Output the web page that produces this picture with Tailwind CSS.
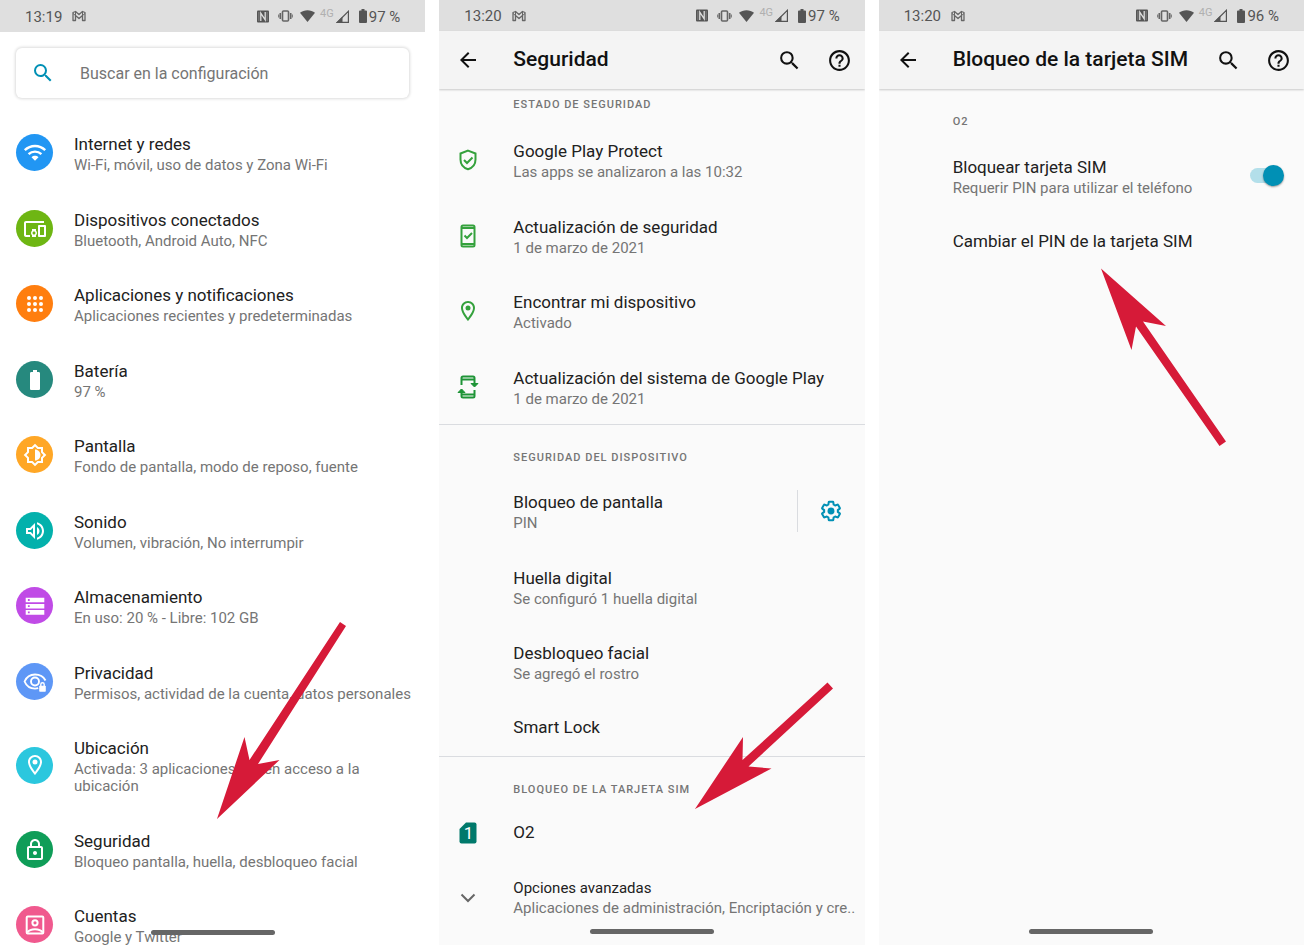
<!DOCTYPE html>
<html lang="es">
<head>
  <meta charset="UTF-8">
  <meta name="viewport" content="width=device-width, initial-scale=1.0">
  <title>Ajustes - Bloqueo de la tarjeta SIM</title>
  <script src="https://cdn.jsdelivr.net/npm/@tailwindcss/browser@4"></script>
</head>
<body class="bg-white font-[Roboto,sans-serif] text-[#212121]">

  <!-- Shared icons -->
  <svg class="hidden">
    <symbol id="gmail" viewBox="0 0 14 12">
      <path d="M1 10.500V2.500L3.500 1.500L7 4.500L10.500 1.500L13 2.500V10.500H10.500V5.500L7 8.500L3.500 5.500V10.500Z" fill="none" stroke="#666" stroke-width="1.300" stroke-linejoin="round" />
      <path d="M3.500 1.500V5.500M10.500 1.500V5.500M1 3.500L3.500 5.500M13 3.500L10.500 5.500" fill="none" stroke="#666" />
    </symbol>
    <symbol id="nfc" viewBox="0 0 12 13">
      <path d="M1 .5H11Q12 .5 12 1.500V11.500Q12 12.500 11 12.500H1Q0 12.500 0 11.500V1.500Q0 .5 1 .5Z" fill="#555" />
      <path d="M3.800 11V3.200L8.200 9.800V2" fill="none" stroke="#dfdfdf" stroke-width="1.300" />
      <path d="M1.900 2V11M10.100 2V11" stroke="#999" stroke-width=".7" />
    </symbol>
    <symbol id="vibration" viewBox="0 0 15 12">
      <rect x="4.500" y="1" width="6" height="10" rx="1" fill="none" stroke="#666" stroke-width="1.600" />
      <path d="M2.300 3V9M12.700 3V9" stroke="#666" stroke-width="1.600" />
      <path d="M.7 4.500V7.500M14.300 4.500V7.500" stroke="#777" stroke-width="1.200" />
    </symbol>
    <symbol id="wifi-full" viewBox="0 0 15 12">
      <path d="M7.500 12L0 2.700C4-.7 11-.7 15 2.700Z" fill="#555" />
    </symbol>
    <symbol id="signal" viewBox="0 0 13 13">
      <path d="M12.400 1.300V12.400H1.300Z" fill="none" stroke="#555" stroke-width="1.200" />
      <path d="M0 13L6.500 6.500V13Z" fill="#555" />
    </symbol>
    <symbol id="battery-status" viewBox="0 0 8 14">
      <path d="M2.500 0H5.500V1.500H7Q8 1.500 8 2.500V13Q8 14 7 14H1Q0 14 0 13V2.500Q0 1.500 1 1.500H2.500Z" fill="#555" />
    </symbol>
    <symbol id="search" viewBox="0 0 24 24">
      <path d="M15.500 14h-.79l-.28-.27A6.471 6.471 0 0 0 16 9.500 6.500 6.500 0 1 0 9.500 16c1.610 0 3.090-.59 4.230-1.570l.27.28v.79l5 4.990L20.490 19l-4.990-5zm-6 0C7.010 14 5 11.990 5 9.500S7.010 5 9.500 5 14 7.010 14 9.500 11.990 14 9.500 14z" fill="currentColor" />
    </symbol>
    <symbol id="back" viewBox="0 0 24 24">
      <path d="M20 11H7.830l5.590-5.590L12 4l-8 8 8 8 1.410-1.410L7.830 13H20v-2z" fill="currentColor" />
    </symbol>
    <symbol id="help" viewBox="0 0 24 24">
      <path d="M11 18h2v-2h-2v2zm1-16C6.480 2 2 6.480 2 12s4.480 10 10 10 10-4.480 10-10S17.520 2 12 2zm0 18c-4.410 0-8-3.590-8-8s3.590-8 8-8 8 3.590 8 8-3.590 8-8 8zm0-14c-2.210 0-4 1.790-4 4h2c0-1.100.9-2 2-2s2 .9 2 2c0 2-3 1.750-3 5h2c0-2.250 3-2.500 3-5 0-2.210-1.790-4-4-4z" fill="currentColor" />
    </symbol>
    <symbol id="place" viewBox="0 0 24 24">
      <path d="M12 2C8.130 2 5 5.130 5 9c0 5.250 7 13 7 13s7-7.750 7-13c0-3.870-3.130-7-7-7zM7 9c0-2.760 2.240-5 5-5s5 2.240 5 5c0 2.880-2.880 7.190-5 9.880C9.920 16.210 7 11.850 7 9z" fill="currentColor" />
      <circle cx="12" cy="9" r="2.500" fill="currentColor" />
    </symbol>
  </svg>

  <main class="grid h-screen grid-cols-3 gap-[14px] overflow-hidden">

    <!-- Settings home -->
    <section class="relative flex min-w-0 flex-col overflow-hidden bg-white">
      <div class="flex h-8 shrink-0 items-center bg-[#dfdfdf] px-[25px] text-[15px] text-[#555]">
        <span class="pt-[2px]">13:19</span>
        <svg class="ml-[10px] h-3 w-[14px]"><use href="#gmail" /></svg>
        <svg class="ml-auto h-[13px] w-3"><use href="#nfc" /></svg>
        <svg class="ml-[9px] h-3 w-[15px]"><use href="#vibration" /></svg>
        <svg class="ml-[7px] h-3 w-[15px]"><use href="#wifi-full" /></svg>
        <span class="ml-[5px] pb-1 text-[11px] text-[#b0b0b0]">4G</span>
        <svg class="ml-[2px] h-[13px] w-[13px]"><use href="#signal" /></svg>
        <svg class="ml-[10px] h-[14px] w-2"><use href="#battery-status" /></svg>
        <span class="ml-[2px] pt-[2px]">97 %</span>
      </div>

      <div class="mx-4 mt-4 flex h-[50px] shrink-0 items-center rounded-md bg-white pl-[15px] shadow-[0_0_3px_1px_rgba(0,0,0,0.14)]">
        <svg class="h-6 w-6 text-[#0090b5]"><use href="#search" /></svg>
        <input type="search" aria-label="Buscar en la configuración" placeholder="Buscar en la configuración" class="ml-[25px] min-w-0 flex-1 bg-transparent pt-[2px] text-base outline-none placeholder:text-[#757575]">
      </div>

      <ul class="mt-[17px] shrink-0">
        <li class="py-4 odd:pb-[17px]">
          <a href="#" class="flex items-center pl-4">
            <span class="mr-[21px] flex h-[37px] w-[37px] shrink-0 items-center justify-center rounded-full bg-[#2196f3] text-white">
              <svg class="h-6 w-6" viewBox="0 0 24 24" fill="none" stroke="currentColor" stroke-width="2.400">
                <path d="M1.800 9.200C7.500 3.600 16.500 3.600 22.200 9.200M5.600 13.200C9.200 9.700 14.800 9.700 18.400 13.200" />
                <path d="M8.500 16.200C10.500 14.300 13.500 14.300 15.500 16.200L12 19.700Z" fill="currentColor" stroke="none" />
              </svg>
            </span>
            <span class="min-w-0">
              <span class="block text-[17px] leading-[26px]">Internet y redes</span>
              <span class="block text-[15px] leading-[17px] text-[#757575]">Wi-Fi, móvil, uso de datos y Zona Wi-Fi</span>
            </span>
          </a>
        </li>
        <li class="py-4 odd:pb-[17px]">
          <a href="#" class="flex items-center pl-4">
            <span class="mr-[21px] flex h-[37px] w-[37px] shrink-0 items-center justify-center rounded-full bg-[#6eb613] text-white">
              <svg class="h-6 w-6" viewBox="0 0 24 24" fill="currentColor">
                <path d="M3 6h18V4H3c-1.100 0-2 .9-2 2v12c0 1.100.9 2 2 2h4v-2H3V6zm10 6H9v1.780c-.61.55-1 1.330-1 2.220s.39 1.670 1 2.220V20h4v-1.780c.61-.55 1-1.340 1-2.220s-.39-1.670-1-2.220V12zm-2 5.500c-.83 0-1.500-.67-1.500-1.500s.67-1.500 1.500-1.500 1.500.67 1.500 1.500-.67 1.500-1.500 1.500zM22 8h-6c-.5 0-1 .5-1 1v10c0 .5.5 1 1 1h6c.5 0 1-.5 1-1V9c0-.5-.5-1-1-1zm-1 10h-4v-8h4v8z" />
              </svg>
            </span>
            <span class="min-w-0">
              <span class="block text-[17px] leading-[26px]">Dispositivos conectados</span>
              <span class="block text-[15px] leading-[17px] text-[#757575]">Bluetooth, Android Auto, NFC</span>
            </span>
          </a>
        </li>
        <li class="py-4 odd:pb-[17px]">
          <a href="#" class="flex items-center pl-4">
            <span class="mr-[21px] flex h-[37px] w-[37px] shrink-0 items-center justify-center rounded-full bg-[#ff7e0f] text-white">
              <svg class="h-6 w-6" viewBox="0 0 24 24" fill="currentColor">
                <circle cx="6" cy="6" r="2" /><circle cx="12" cy="6" r="2" /><circle cx="18" cy="6" r="2" />
                <circle cx="6" cy="12" r="2" /><circle cx="12" cy="12" r="2" /><circle cx="18" cy="12" r="2" />
                <circle cx="6" cy="18" r="2" /><circle cx="12" cy="18" r="2" /><circle cx="18" cy="18" r="2" />
              </svg>
            </span>
            <span class="min-w-0">
              <span class="block text-[17px] leading-[26px]">Aplicaciones y notificaciones</span>
              <span class="block text-[15px] leading-[17px] text-[#757575]">Aplicaciones recientes y predeterminadas</span>
            </span>
          </a>
        </li>
        <li class="py-4 odd:pb-[17px]">
          <a href="#" class="flex items-center pl-4">
            <span class="mr-[21px] flex h-[37px] w-[37px] shrink-0 items-center justify-center rounded-full bg-[#26897e] text-white">
              <svg class="h-6 w-6" viewBox="0 0 24 24" fill="currentColor">
                <path d="M15.670 4H14V2h-4v2H8.330C7.600 4 7 4.600 7 5.330v15.330C7 21.400 7.600 22 8.330 22h7.330c.74 0 1.340-.6 1.340-1.330V5.330C17 4.600 16.400 4 15.670 4z" />
              </svg>
            </span>
            <span class="min-w-0">
              <span class="block text-[17px] leading-[26px]">Batería</span>
              <span class="block text-[15px] leading-[17px] text-[#757575]">97 %</span>
            </span>
          </a>
        </li>
        <li class="py-4 odd:pb-[17px]">
          <a href="#" class="flex items-center pl-4">
            <span class="mr-[21px] flex h-[37px] w-[37px] shrink-0 items-center justify-center rounded-full bg-[#ffa726] text-white">
              <svg class="h-6 w-6" viewBox="0 0 24 24" fill="currentColor">
                <path d="M20 15.310L23.310 12 20 8.690V4h-4.690L12 .69 8.690 4H4v4.690L.69 12 4 15.310V20h4.690L12 23.310 15.310 20H20v-4.690zm-2-.83V18h-3.520L12 20.480 9.520 18H6v-3.520L3.520 12 6 9.520V6h3.520L12 3.520 14.480 6H18v3.520L20.480 12 18 14.480z" />
                <path d="M12 6.500V17.500C15 17.500 17.500 15 17.500 12S15 6.500 12 6.500Z" />
              </svg>
            </span>
            <span class="min-w-0">
              <span class="block text-[17px] leading-[26px]">Pantalla</span>
              <span class="block text-[15px] leading-[17px] text-[#757575]">Fondo de pantalla, modo de reposo, fuente</span>
            </span>
          </a>
        </li>
        <li class="py-4 odd:pb-[17px]">
          <a href="#" class="flex items-center pl-4">
            <span class="mr-[21px] flex h-[37px] w-[37px] shrink-0 items-center justify-center rounded-full bg-[#03b1ac] text-white">
              <svg class="h-6 w-6" viewBox="0 0 24 24" fill="currentColor">
                <path d="M3 9v6h4l5 5V4L7 9H3zm7-.17v6.340L7.830 13H5v-2h2.830L10 8.830zM16.500 12c0-1.770-1.020-3.290-2.500-4.030v8.050c1.480-.73 2.500-2.250 2.500-4.020zM14 3.230v2.060c2.890.86 5 3.540 5 6.710s-2.110 5.850-5 6.710v2.060c4.010-.91 7-4.490 7-8.770s-2.990-7.860-7-8.770z" />
              </svg>
            </span>
            <span class="min-w-0">
              <span class="block text-[17px] leading-[26px]">Sonido</span>
              <span class="block text-[15px] leading-[17px] text-[#757575]">Volumen, vibración, No interrumpir</span>
            </span>
          </a>
        </li>
        <li class="py-4 odd:pb-[17px]">
          <a href="#" class="flex items-center pl-4">
            <span class="mr-[21px] flex h-[37px] w-[37px] shrink-0 items-center justify-center rounded-full bg-[#c04be6] text-white">
              <svg class="h-6 w-6" viewBox="0 0 24 24" fill="currentColor" fill-rule="evenodd">
                <path d="M2.700 3.700h18.600v4.600H2.700zM4.900 5.100v1.800h1.800V5.100zM2.700 9.900h18.600v4.600H2.700zM4.900 11.300v1.800h1.800v-1.800zM2.700 16.100h18.600v4.600H2.700zM4.900 17.500v1.800h1.800v-1.800z" />
              </svg>
            </span>
            <span class="min-w-0">
              <span class="block text-[17px] leading-[26px]">Almacenamiento</span>
              <span class="block text-[15px] leading-[17px] text-[#757575]">En uso: 20 % - Libre: 102 GB</span>
            </span>
          </a>
        </li>
        <li class="py-4 odd:pb-[17px]">
          <a href="#" class="flex items-center pl-4">
            <span class="mr-[21px] flex h-[37px] w-[37px] shrink-0 items-center justify-center rounded-full bg-[#5e97f6] text-white">
              <svg class="h-6 w-6" viewBox="0 0 24 24" fill="none" stroke="currentColor" stroke-width="1.900">
                <path d="M22.500 10.500C20.500 6.600 16.500 4.500 12 4.500C7.200 4.500 3.400 7.300 1.600 11.500C3.400 15.900 7.200 18.600 12 18.600C13.100 18.600 14.200 18.500 15.200 18.200" />
                <circle cx="12" cy="11.500" r="4" />
                <path d="M17.800 16V14.500A1.700 1.700 0 0 1 21.200 14.500V16" stroke-width="1.400" />
                <rect x="16.200" y="15.800" width="6.600" height="6" rx=".8" fill="currentColor" stroke="none" />
              </svg>
            </span>
            <span class="min-w-0">
              <span class="block text-[17px] leading-[26px]">Privacidad</span>
              <span class="block text-[15px] leading-[17px] text-[#757575]">Permisos, actividad de la cuenta, datos personales</span>
            </span>
          </a>
        </li>
        <li class="py-4 odd:pb-[17px]">
          <a href="#" class="flex items-center pr-14 pl-4">
            <span class="mr-[21px] flex h-[37px] w-[37px] shrink-0 items-center justify-center rounded-full bg-[#2bc7de] text-white">
              <svg class="h-6 w-6"><use href="#place" /></svg>
            </span>
            <span class="min-w-0">
              <span class="block text-[17px] leading-[26px]">Ubicación</span>
              <span class="block text-[15px] leading-[17px] text-[#757575]">Activada: 3 aplicaciones tienen acceso a la ubicación</span>
            </span>
          </a>
        </li>
        <li class="py-4 odd:pb-[17px]">
          <a href="#" class="flex items-center pl-4">
            <span class="mr-[21px] flex h-[37px] w-[37px] shrink-0 items-center justify-center rounded-full bg-[#0f9d58] text-white">
              <svg class="h-6 w-6" viewBox="0 0 24 24" fill="currentColor">
                <path d="M18 8h-1V6c0-2.760-2.240-5-5-5S7 3.240 7 6v2H6c-1.100 0-2 .9-2 2v10c0 1.100.9 2 2 2h12c1.100 0 2-.9 2-2V10c0-1.100-.9-2-2-2zM9 6c0-1.660 1.340-3 3-3s3 1.340 3 3v2H9V6zm9 14H6V10h12v10zm-6-3c1.100 0 2-.9 2-2s-.9-2-2-2-2 .9-2 2 .9 2 2 2z" />
              </svg>
            </span>
            <span class="min-w-0">
              <span class="block text-[17px] leading-[26px]">Seguridad</span>
              <span class="block text-[15px] leading-[17px] text-[#757575]">Bloqueo pantalla, huella, desbloqueo facial</span>
            </span>
          </a>
        </li>
        <li class="py-4 odd:pb-[17px]">
          <a href="#" class="flex items-center pl-4">
            <span class="mr-[21px] flex h-[37px] w-[37px] shrink-0 items-center justify-center rounded-full bg-[#f0598e] text-white">
              <svg class="h-6 w-6" viewBox="0 0 24 24" fill="none" stroke="currentColor" stroke-width="2">
                <rect x="3.700" y="3.500" width="16.600" height="17" rx="1" />
                <circle cx="12" cy="9.800" r="2.600" />
                <path d="M4.300 19.500C7.300 15.200 16.700 15.200 19.700 19.500" />
              </svg>
            </span>
            <span class="min-w-0">
              <span class="block text-[17px] leading-[26px]">Cuentas</span>
              <span class="block text-[15px] leading-[17px] text-[#757575]">Google y Twitter</span>
            </span>
          </a>
        </li>
      </ul>

      <svg class="absolute top-[619px] left-[215px] h-[202px] w-[134px]" viewBox="215 619 134 202">
        <path d="M217 819L244.500 737L249.500 760L340 622L346 626L258 764L279.500 760Z" fill="#d61a38" />
      </svg>
      <div class="absolute bottom-[10px] left-1/2 h-[5px] w-[124px] -translate-x-1/2 rounded-full bg-[#666]"></div>
    </section>

    <!-- Security -->
    <section class="relative flex min-w-0 flex-col overflow-hidden bg-[#fafafa]">
      <div class="flex h-[31px] shrink-0 items-center bg-[#dfdfdf] px-[25px] text-[15px] text-[#555]">
        <span class="pt-[2px]">13:20</span>
        <svg class="ml-[10px] h-3 w-[14px]"><use href="#gmail" /></svg>
        <svg class="ml-auto h-[13px] w-3"><use href="#nfc" /></svg>
        <svg class="ml-[9px] h-3 w-[15px]"><use href="#vibration" /></svg>
        <svg class="ml-[7px] h-3 w-[15px]"><use href="#wifi-full" /></svg>
        <span class="ml-[5px] pb-1 text-[11px] text-[#b0b0b0]">4G</span>
        <svg class="ml-[2px] h-[13px] w-[13px]"><use href="#signal" /></svg>
        <svg class="ml-[10px] h-[14px] w-2"><use href="#battery-status" /></svg>
        <span class="ml-[2px] pt-[2px]">97 %</span>
      </div>
      <header class="flex h-[58px] shrink-0 items-center bg-[#f4f4f4] pr-[13px] pl-[17px] text-[#111] shadow-[0_1px_2px_rgba(0,0,0,0.2)]">
        <button type="button" aria-label="Atrás"><svg class="h-6 w-6"><use href="#back" /></svg></button>
        <h1 class="ml-[33px] flex-1 text-[21px] font-medium">Seguridad</h1>
        <button type="button" aria-label="Buscar"><svg class="h-[25px] w-[25px]"><use href="#search" /></svg></button>
        <button type="button" aria-label="Ayuda" class="ml-[25px]"><svg class="h-[25px] w-[25px]"><use href="#help" /></svg></button>
      </header>

      <h2 class="flex h-[33px] shrink-0 items-center pl-[74px] text-[11px] font-medium tracking-[1px] text-[#757575] uppercase">Estado de seguridad</h2>
      <ul class="border-b border-[#dadce0]">
        <li class="py-4 odd:pb-[17px]">
          <a href="#" class="flex items-center pl-[17px]">
            <svg class="mr-[33px] h-6 w-6 shrink-0 text-[#34a13c]" viewBox="0 0 24 24" fill="none" stroke="currentColor" stroke-width="2">
              <path d="M12 2.600L19.500 5.500V11.500C19.500 16 16.500 19.800 12 21.200C7.500 19.800 4.500 16 4.500 11.500V5.500Z" />
              <path d="M8 12L11 15L16.500 9.500" />
            </svg>
            <span class="min-w-0">
              <span class="block text-[17px] leading-[26px]">Google Play Protect</span>
              <span class="block text-[15px] leading-[17px] text-[#757575]">Las apps se analizaron a las 10:32</span>
            </span>
          </a>
        </li>
        <li class="py-4 odd:pb-[17px]">
          <a href="#" class="flex items-center pl-[17px]">
            <svg class="mr-[33px] h-6 w-6 shrink-0 text-[#34a13c]" viewBox="0 0 24 24" fill="none" stroke="currentColor" stroke-width="2">
              <rect x="5.500" y="1.500" width="13" height="21" rx="1.500" />
              <path d="M5.500 4H18.500M5.500 20H18.500" stroke-width="2.200" />
              <path d="M8.500 11.500L11 14L16 9" />
            </svg>
            <span class="min-w-0">
              <span class="block text-[17px] leading-[26px]">Actualización de seguridad</span>
              <span class="block text-[15px] leading-[17px] text-[#757575]">1 de marzo de 2021</span>
            </span>
          </a>
        </li>
        <li class="py-4 odd:pb-[17px]">
          <a href="#" class="flex items-center pl-[17px]">
            <svg class="mr-[33px] h-6 w-6 shrink-0 text-[#34a13c]"><use href="#place" /></svg>
            <span class="min-w-0">
              <span class="block text-[17px] leading-[26px]">Encontrar mi dispositivo</span>
              <span class="block text-[15px] leading-[17px] text-[#757575]">Activado</span>
            </span>
          </a>
        </li>
        <li class="py-4 odd:pb-[17px]">
          <a href="#" class="flex items-center pl-[17px]">
            <svg class="mr-[33px] h-6 w-6 shrink-0 text-[#1e9437]" viewBox="0 0 24 24" fill="none" stroke="currentColor" stroke-width="2">
              <path d="M5.500 10V3Q5.500 1.500 7 1.500H17Q18.500 1.500 18.500 3V11M5.500 4.500H18.500" />
              <path d="M18.500 15V21Q18.500 22.500 17 22.500H7Q5.500 22.500 5.500 21V14.500M5.500 19.500H18.500" />
              <path d="M15 8.500H22L18.500 12ZM2 17.500H9L5.500 14Z" fill="currentColor" stroke-width="1" />
            </svg>
            <span class="min-w-0">
              <span class="block text-[17px] leading-[26px]">Actualización del sistema de Google Play</span>
              <span class="block text-[15px] leading-[17px] text-[#757575]">1 de marzo de 2021</span>
            </span>
          </a>
        </li>
      </ul>

      <h2 class="flex h-12 shrink-0 items-center pt-[18px] pl-[74px] text-[11px] font-medium tracking-[1px] text-[#757575] uppercase">Seguridad del dispositivo</h2>
      <ul class="border-b border-[#dadce0]">
        <li class="flex items-center py-4 odd:pb-[17px]">
          <a href="#" class="min-w-0 flex-1 pl-[74px]">
            <span class="block text-[17px] leading-[26px]">Bloqueo de pantalla</span>
            <span class="block text-[15px] leading-[17px] text-[#757575]">PIN</span>
          </a>
          <button type="button" aria-label="Ajustes de bloqueo de pantalla" class="flex h-[42px] items-center border-l border-[#dadce0] pr-[23px] pl-[22px] text-[#0090b5]">
            <svg class="h-[22px] w-[22px]" viewBox="0 0 24 24">
              <path d="M19.430 12.980c.04-.32.07-.64.07-.98s-.03-.66-.07-.98l2.110-1.650c.19-.15.24-.42.12-.64l-2-3.460c-.12-.22-.39-.3-.61-.22l-2.490 1c-.52-.4-1.080-.73-1.690-.98l-.38-2.650C14.460 2.180 14.250 2 14 2h-4c-.25 0-.46.18-.49.42l-.38 2.650c-.61.25-1.170.59-1.690.98l-2.490-1c-.23-.09-.49 0-.61.22l-2 3.460c-.13.22-.07.49.12.64l2.110 1.650c-.04.32-.07.65-.07.98s.03.66.07.98l-2.110 1.650c-.19.15-.24.42-.12.64l2 3.460c.12.22.39.3.61.22l2.490-1c.52.4 1.080.73 1.690.98l.38 2.650c.03.24.24.42.49.42h4c.25 0 .46-.18.49-.42l.38-2.650c.61-.25 1.170-.59 1.690-.98l2.490 1c.23.09.49 0 .61-.22l2-3.460c.12-.22.07-.49-.12-.64l-2.110-1.650z" fill="none" stroke="currentColor" stroke-width="2.200" stroke-linejoin="round" />
              <circle cx="12" cy="12" r="3.800" fill="currentColor" />
            </svg>
          </button>
        </li>
        <li class="py-4 odd:pb-[17px]">
          <a href="#" class="block pl-[74px]">
            <span class="block text-[17px] leading-[26px]">Huella digital</span>
            <span class="block text-[15px] leading-[17px] text-[#757575]">Se configuró 1 huella digital</span>
          </a>
        </li>
        <li class="py-4 odd:pb-[17px]">
          <a href="#" class="block pl-[74px]">
            <span class="block text-[17px] leading-[26px]">Desbloqueo facial</span>
            <span class="block text-[15px] leading-[17px] text-[#757575]">Se agregó el rostro</span>
          </a>
        </li>
        <li>
          <a href="#" class="flex h-14 items-center pl-[74px] text-[17px]">Smart Lock</a>
        </li>
      </ul>

      <h2 class="flex h-12 shrink-0 items-center pt-[18px] pl-[74px] text-[11px] font-medium tracking-[1px] text-[#757575] uppercase">Bloqueo de la tarjeta SIM</h2>
      <ul>
        <li>
          <a href="#" class="flex h-14 items-center pl-[17px] text-[17px]">
            <svg class="mr-[33px] h-6 w-6 shrink-0" viewBox="0 0 24 24">
              <path d="M10 1.500H18.500Q20.500 1.500 20.500 3.500V20.500Q20.500 22.500 18.500 22.500H5.500Q3.500 22.500 3.500 20.500V8Z" fill="#00796b" />
              <text x="12.500" y="18" text-anchor="middle" font-family="Roboto, sans-serif" font-size="17" fill="#fff">1</text>
            </svg>
            O2
          </a>
        </li>
        <li>
          <a href="#" class="flex h-[73px] items-center pr-2 pl-[17px]">
            <svg class="mr-[33px] h-6 w-6 shrink-0" viewBox="0 0 24 24" fill="none" stroke="#666" stroke-width="2">
              <path d="M5.500 8.500L12 15L18.500 8.500" />
            </svg>
            <span class="min-w-0">
              <span class="block text-[15px] leading-5">Opciones avanzadas</span>
              <span class="block truncate text-[15px] leading-5 text-[#757575]">Aplicaciones de administración, Encriptación y cre..</span>
            </span>
          </a>
        </li>
      </ul>

      <svg class="absolute top-[680px] left-[254px] h-[132px] w-[142px]" viewBox="693 680 142 132">
        <path d="M695 809L743 737L742.500 760L827.500 682.500L833 688.500L748.500 766.500L771.500 768.500Z" fill="#d61a38" />
      </svg>
      <div class="absolute bottom-[11px] left-1/2 h-[5px] w-[124px] -translate-x-1/2 rounded-full bg-[#666]"></div>
    </section>

    <!-- SIM card lock -->
    <section class="relative flex min-w-0 flex-col overflow-hidden bg-[#fafafa]">
      <div class="flex h-[31px] shrink-0 items-center bg-[#dfdfdf] px-[25px] text-[15px] text-[#555]">
        <span class="pt-[2px]">13:20</span>
        <svg class="ml-[10px] h-3 w-[14px]"><use href="#gmail" /></svg>
        <svg class="ml-auto h-[13px] w-3"><use href="#nfc" /></svg>
        <svg class="ml-[9px] h-3 w-[15px]"><use href="#vibration" /></svg>
        <svg class="ml-[7px] h-3 w-[15px]"><use href="#wifi-full" /></svg>
        <span class="ml-[5px] pb-1 text-[11px] text-[#b0b0b0]">4G</span>
        <svg class="ml-[2px] h-[13px] w-[13px]"><use href="#signal" /></svg>
        <svg class="ml-[10px] h-[14px] w-2"><use href="#battery-status" /></svg>
        <span class="ml-[2px] pt-[2px]">96 %</span>
      </div>
      <header class="flex h-[58px] shrink-0 items-center bg-[#f4f4f4] pr-[13px] pl-[17px] text-[#111] shadow-[0_1px_2px_rgba(0,0,0,0.2)]">
        <button type="button" aria-label="Atrás"><svg class="h-6 w-6"><use href="#back" /></svg></button>
        <h1 class="ml-[33px] flex-1 text-[21px] font-medium">Bloqueo de la tarjeta SIM</h1>
        <button type="button" aria-label="Buscar"><svg class="h-[25px] w-[25px]"><use href="#search" /></svg></button>
        <button type="button" aria-label="Ayuda" class="ml-[25px]"><svg class="h-[25px] w-[25px]"><use href="#help" /></svg></button>
      </header>

      <h2 class="flex h-[49px] shrink-0 items-center pt-[18px] pl-[74px] text-[11px] font-medium tracking-[1px] text-[#757575] uppercase">O2</h2>
      <ul>
        <li class="py-4 odd:pb-[17px]">
          <label class="flex items-center pr-5 pl-[74px]">
            <span class="min-w-0 flex-1">
              <span class="block text-[17px] leading-[26px]">Bloquear tarjeta SIM</span>
              <span class="block text-[15px] leading-[17px] text-[#757575]">Requerir PIN para utilizar el teléfono</span>
            </span>
            <span class="relative flex h-[21px] w-[34px] items-center">
              <input type="checkbox" role="switch" checked class="peer h-[15px] w-[30px] appearance-none rounded-full bg-[#b0b0b0] checked:bg-[#b3dfea]">
              <span class="absolute left-0 h-[21px] w-[21px] rounded-full bg-white shadow-[0_1px_2px_rgba(0,0,0,0.4)] peer-checked:right-0 peer-checked:left-auto peer-checked:bg-[#0090b5]"></span>
            </span>
          </label>
        </li>
        <li>
          <a href="#" class="flex h-14 items-center pl-[74px] text-[17px]">Cambiar el PIN de la tarjeta SIM</a>
        </li>
      </ul>

      <svg class="absolute top-[266px] left-[220px] h-[183px] w-[130px]" viewBox="1099 266 130 183">
        <path d="M1101 268.500L1166 326L1143 321.500L1226 441.500L1219.500 446L1136 326.500L1131.500 350Z" fill="#d61a38" />
      </svg>
      <div class="absolute bottom-[11px] left-1/2 h-[5px] w-[124px] -translate-x-1/2 rounded-full bg-[#666]"></div>
    </section>

  </main>
</body>
</html>
